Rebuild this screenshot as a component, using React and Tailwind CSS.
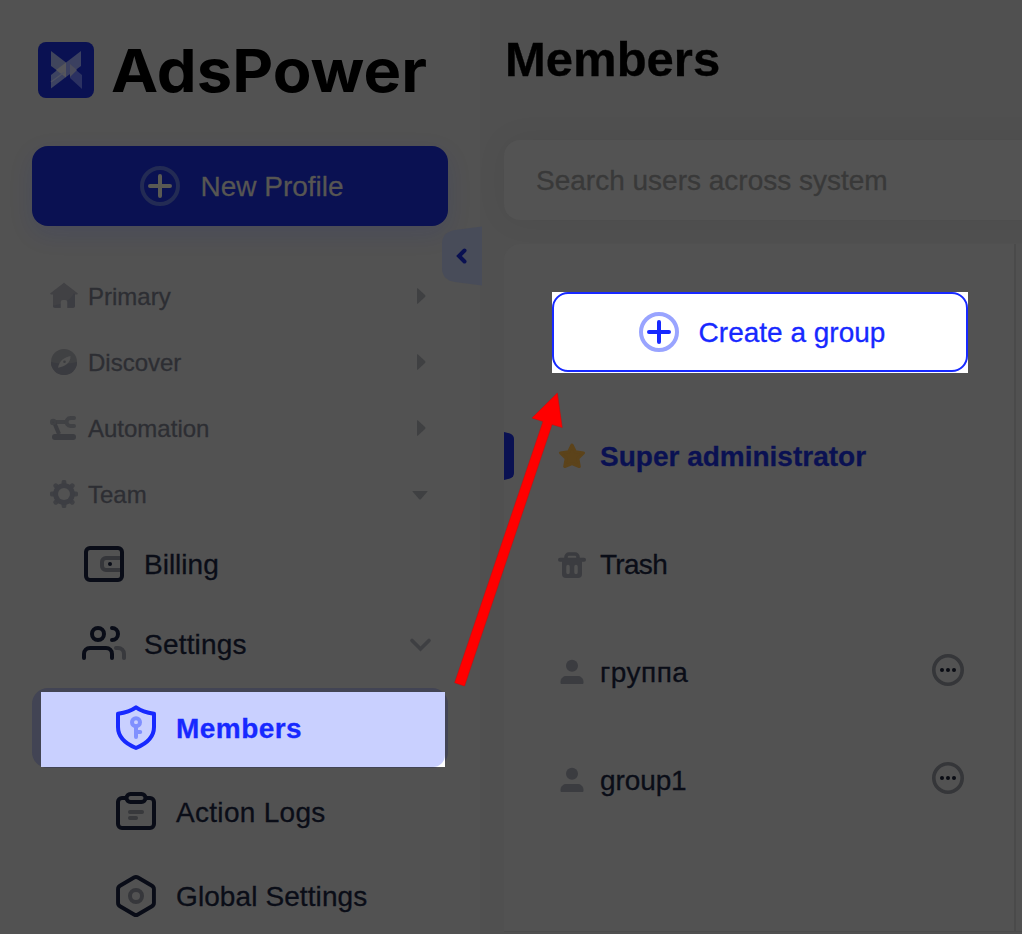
const HomeIcon = () => (
  <svg width="28" height="28" viewBox="0 0 28 28">
    <path d="M14 .8 27.600 11.300q.6 1-.6 1.100H25v11.400a2 2 0 0 1-2 2H5a2 2 0 0 1-2-2V12.400H1q-1.200-.1-.6-1.100z" fill="#414144" />
    <path d="M25 12.400v11.400a2 2 0 0 1-2 2H5a2 2 0 0 1-2-2C13 22 21 18 24 11z" fill="#3c3d42" />
    <path d="M10.700 26v-6a2 2 0 0 1 2-2h2.600a2 2 0 0 1 2 2v6z" fill="#525252" />
  </svg>
);

const CompassIcon = () => (
  <svg width="28" height="28" viewBox="0 0 28 28">
    <circle cx="14" cy="14" r="13" fill="#404143" />
    <path d="M1 14a13 13 0 0 0 26 0C18 16 10 16 1 14z" fill="#3a3b40" />
    <path d="M20.500 8c.3 3-1 6-3.800 8.200-2.300 1.500-6 3.300-8.700 3.600.6-3.300 2.300-6.300 4.600-8.200C15 9.800 18 8.600 20.500 8z" fill="#525252" />
    <circle cx="14.500" cy="13.700" r="1.300" fill="#3c3d41" />
  </svg>
);

const RobotIcon = () => (
  <svg width="28" height="28" viewBox="0 0 28 28" fill="none" stroke="#404144" strokeWidth="4" strokeLinecap="round">
    <path d="M3 8h12" />
    <path d="m4 8 5 12" stroke="#3c3d41" strokeLinecap="butt" />
    <path d="M24 4h-3.500c-3 0-4 3-4 4s1 4 4 4H24" strokeLinejoin="round" />
    <circle cx="3.200" cy="8" r="1.200" />
    <path d="M5 23h18" stroke="#3b3c40" strokeWidth="6" />
  </svg>
);

const GearIcon = () => (
  <svg width="28" height="28" viewBox="0 0 28 28">
    <path d="M14 2.200v23.600M2.200 14h23.600M5.800 5.800l16.400 16.400M22.200 5.800 5.800 22.200" stroke="#3f4044" strokeWidth="4.800" strokeLinecap="round" />
    <circle cx="14" cy="14" r="10.800" fill="#3d3e43" />
    <circle cx="14" cy="14" r="6" fill="#525252" />
  </svg>
);

const WalletIcon = () => (
  <svg width="48" height="48" viewBox="0 0 48 48" fill="none" strokeWidth="4">
    <path d="M42 18H26a4 4 0 0 0-4 4v4a4 4 0 0 0 4 4h16" stroke="#35363a" />
    <rect x="6" y="8" width="36" height="32" rx="4" stroke="#090c17" />
    <circle cx="30" cy="24" r="2" fill="#090c17" />
  </svg>
);

const UsersIcon = () => (
  <svg width="48" height="48" viewBox="0 0 48 48" fill="none" stroke="#090c17" strokeWidth="4" strokeLinecap="round">
    <circle cx="18" cy="14" r="6" />
    <path d="M32 8a6 6 0 0 1 0 12" />
    <path d="M4 38v-4a6 6 0 0 1 6-6h16a6 6 0 0 1 6 6v4" />
    <path d="M36 28h2a6 6 0 0 1 6 6v4" stroke="#38393d" />
  </svg>
);

const ShieldIcon = () => (
  <svg width="48" height="48" viewBox="0 0 48 48" fill="none" strokeWidth="4" strokeLinejoin="round">
    <path d="M24 3.400c5 3.600 11 5.400 18 6.400V23c0 9-7 16.500-18 21C13 39.500 6 32 6 23V9.800C13 8.800 19 7 24 3.400z" stroke="#1729ff" />
    <g stroke="#8090ff">
      <circle cx="24" cy="18.300" r="4" />
      <path d="M24 22v11" strokeLinecap="round" />
      <path d="M24 28h4.200" strokeLinecap="round" />
    </g>
  </svg>
);

const ClipboardIcon = () => (
  <svg width="48" height="48" viewBox="0 0 48 48" fill="none" stroke="#090c17" strokeWidth="4" strokeLinecap="round">
    <path d="M14 10h-4a4 4 0 0 0-4 4v22a4 4 0 0 0 4 4h28a4 4 0 0 0 4-4V14a4 4 0 0 0-4-4h-4" />
    <rect x="14.500" y="6" width="19" height="8" rx="4" />
    <path d="M18 24h12M18 30h6" stroke="#38393c" />
  </svg>
);

const HexIcon = () => (
  <svg width="48" height="48" viewBox="0 0 48 48" fill="none" strokeWidth="4">
    <path d="M22 5.600a4 4 0 0 1 4 0l14.500 8.200a4 4 0 0 1 2 3.500v13.400a4 4 0 0 1-2 3.500L26 42.400a4 4 0 0 1-4 0L7.500 34.200a4 4 0 0 1-2-3.500V17.300a4 4 0 0 1 2-3.500z" stroke="#090c17" transform="translate(.7 0) scale(.97 1)" />
    <circle cx="24" cy="24" r="6" stroke="#36373b" />
  </svg>
);

const PlusIcon = ({ ring, plus }) => (
  <svg width="40" height="40" viewBox="0 0 40 40" fill="none" strokeWidth="4" strokeLinecap="round">
    <circle cx="20" cy="20" r="18" stroke={ring} />
    <path d="M20 10v20M10 20h20" stroke={plus} />
  </svg>
);

const StarIcon = () => (
  <svg width="28" height="28" viewBox="0 0 28 28">
    <path d="m14 3 3.300 6.700 8.200 1.200-5.700 5.400 1.500 8.200L14 21.500l-7.300 3 1.500-8.200-5.700-5.400 8.200-1.200z" fill="#5c431a" stroke="#5c431a" strokeWidth="3" strokeLinejoin="round" />
  </svg>
);

const TrashIcon = () => (
  <svg width="28" height="28" viewBox="0 0 28 28">
    <path d="M8 8V6a3 3 0 0 1 3-3h6a3 3 0 0 1 3 3v2" fill="none" stroke="#3a3b3f" strokeWidth="3.500" />
    <path d="M2 8.700h24" stroke="#3a3b3f" strokeWidth="4" strokeLinecap="round" />
    <path d="M4 9h20v14a4 4 0 0 1-4 4H8a4 4 0 0 1-4-4z" fill="#3b3c40" />
    <path d="M10 15.500v6M18 15.500v6" stroke="#525252" strokeWidth="3.500" strokeLinecap="round" />
  </svg>
);

const PersonIcon = () => (
  <svg width="28" height="28" viewBox="0 0 28 28" fill="#3b3c40">
    <circle cx="14" cy="7.800" r="6" />
    <path d="M3 25.500v-2a5 5 0 0 1 5-5h12a5 5 0 0 1 5 5v2z" stroke="#3b3c40" strokeLinejoin="round" />
  </svg>
);

const MoreIcon = () => (
  <svg width="32" height="32" viewBox="0 0 32 32">
    <circle cx="16" cy="16" r="14.200" fill="none" stroke="#353639" strokeWidth="3.600" />
    <g fill="#0a0c14">
      <circle cx="10" cy="16" r="2" />
      <circle cx="16" cy="16" r="2" />
      <circle cx="22" cy="16" r="2" />
    </g>
  </svg>
);

const Logo = () => (
  <svg width="400" height="72" viewBox="0 0 400 72" className="block">
    <rect x="0" y="8" width="56" height="56" rx="8" fill="#0a1152" />
    <path d="m13 17 15 11.500V43L13 32z" fill="#40455c" />
    <path d="M43 17 28 28.500V43l15-11z" fill="#3b4060" />
    <path d="M13 41 28 29v14L13 54.500z" fill="#3d4361" />
    <path d="m32 31 12 10v14L32 44z" fill="#2b3161" />
    <path d="m18 36 10-7.500v15z" fill="#56565b" />
    <path d="m32 30 7 6-7 7z" fill="#4b4c5b" />
    <path d="m13 48 13-9.500" stroke="#4d5163" strokeWidth="1.500" />
    <text x="73" y="57.500" fill="#000" textLength="316" lengthAdjust="spacingAndGlyphs" className="font-[Inter] text-[59px] font-bold">
      AdsPower
    </text>
  </svg>
);

const sections = [
  { name: 'Primary', Icon: HomeIcon },
  { name: 'Discover', Icon: CompassIcon },
  { name: 'Automation', Icon: RobotIcon },
  { name: 'Team', Icon: GearIcon, open: true },
];

const groups = [
  { name: 'группа', style: 'tracking-[0.5px]' },
  { name: 'group1', style: 'tracking-[-0.1px]' },
];

const Sidebar = () => (
  <aside className="relative w-[480px] h-full shrink-0 bg-[#525252] px-8 text-[#0a0d17]">
    <div className="pt-[34px] pl-1.5 h-[146px]">
      <Logo />
    </div>
    <button className="flex h-20 w-[416px] items-center justify-center gap-5 rounded-2xl bg-[#0a1152] pl-1 text-[28px] text-[#575652] shadow-[0_8px_24px_rgba(20,30,150,0.12)]">
      <PlusIcon ring="#232b54" plus="#5a5953" />
      <span className="pt-0.5">New Profile</span>
    </button>

    <nav className="pt-[37px]">
      {sections.map(({ name, Icon, open }) => (
        <div key={name} className="flex h-[66px] items-center pl-[18px] pr-5 text-2xl text-[#2d2e33]">
          <Icon />
          <span className="ml-2.5 flex-1 pt-0.5">{name}</span>
          {open ? (
            <svg width="16" height="16" viewBox="0 0 16 16"><path d="M.5 5.500Q0 5 1 5h14q1 0 .5.500L9 13q-1 1-2 0z" fill="#3f4042" /></svg>
          ) : (
            <svg width="16" height="16" viewBox="0 0 16 16"><path d="M5 .5Q5 0 6 .5l7 6.500q1 1 0 2l-7 6.500q-1 .5-1 0z" fill="#3f4042" /></svg>
          )}
        </div>
      ))}

      <div className="-mt-[3px] text-[28px]">
        <div className="flex h-20 items-center gap-4 pl-12">
          <WalletIcon />
          <span className="pt-0.5">Billing</span>
        </div>
        <div className="flex h-20 items-center gap-4 pl-12 pr-3.5">
          <UsersIcon />
          <span className="flex-1 pt-0.5 tracking-[0.2px]">Settings</span>
          <svg width="27" height="16" viewBox="0 0 27 16">
            <path d="m5 4.500 8.500 8.500L22 4.500" fill="none" stroke="#3e3f42" strokeWidth="3.600" strokeLinecap="round" />
          </svg>
        </div>
        <div className="mt-1 h-20 w-[416px] rounded-2xl bg-[#424454] pt-1 pl-[9px]">
          {/* highlighted step, square cut-out over the rounded item */}
          <div className="h-[75px] w-[404px] bg-white">
            <div className="flex h-full items-center gap-4 rounded-br-xl bg-[#c9d0ff] pl-[71px] pb-[3px] font-bold text-[#1729ff]">
              <ShieldIcon />
              <span className="pt-0.5 tracking-[0.45px]">Members</span>
            </div>
          </div>
        </div>
        <div className="mt-1 flex h-20 items-center gap-4 pl-20">
          <ClipboardIcon />
          <span className="pt-0.5 tracking-[0.3px]">Action Logs</span>
        </div>
        <div className="mt-1 flex h-20 items-center gap-4 pl-20">
          <HexIcon />
          <span className="pt-0.5 tracking-[0.1px]">Global Settings</span>
        </div>
      </div>
    </nav>

    {/* collapse handle */}
    <svg width="40" height="60" viewBox="0 0 40 60" className="absolute left-[442px] top-[226px] z-10">
      <path d="M40 .5v59L13 56Q0 54 0 42V18Q0 6 13 4z" fill="#484c59" />
      <path d="m22.500 24.500-5.500 5.500 5.500 5.500" fill="none" stroke="#0a1152" strokeWidth="4" strokeLinecap="round" />
    </svg>
  </aside>
);

const Members = () => (
  <main className="flex-1 min-w-0 bg-[#505050] pl-6 text-[28px] text-[#0a0d17]">
    <h1 className="flex h-[116px] items-center pt-1 pl-px text-[49px] font-bold text-black">Members</h1>
    <div className="mt-6 flex h-20 w-[700px] items-center rounded-2xl bg-[#535353] pl-8 pt-0.5 text-[#393939] shadow-[0_0_32px_rgba(0,0,0,0.06)]">
      Search users across system
    </div>
    <div className="mt-6 flex h-[688px] w-[700px] rounded-tl-2xl border-b border-[#4b4b4b] bg-[#525252]">
      <section className="w-[512px] border-r-2 border-[#4a4a4a]">
        <div className="mt-12 ml-12 h-[81px] w-[416px] bg-white">
          <button className="flex h-20 w-full items-center justify-center gap-5 rounded-2xl border-2 border-[#1729ff] pl-1 text-[#1729ff]">
            <PlusIcon ring="#99a4ff" plus="#1729ff" />
            <span className="pt-0.5">Create a group</span>
          </button>
        </div>
        <ul className="mt-[29px]">
          <li className="flex h-[108px] items-center font-bold text-[#0a1152]">
            <svg width="10" height="48" viewBox="0 0 10 48"><path d="M0 0 6 1.500Q10 3 10 7v34q0 4-4 5.500L0 48z" fill="#0a1152" /></svg>
            <span className="ml-11 mr-3.5"><StarIcon /></span>
            <span className="pt-0.5">Super administrator</span>
          </li>
          <li className="flex h-[108px] items-center gap-3.5 pl-[54px]">
            <span className="pt-0.5"><TrashIcon /></span>
            <span className="pt-0.5 tracking-[-0.7px]">Trash</span>
          </li>
          {groups.map(({ name, style }) => (
            <li key={name} className="flex h-[108px] items-center pl-[54px] pr-[50px]">
              <PersonIcon />
              <span className={`ml-3.5 flex-1 pt-0.5 ${style}`}>{name}</span>
              <span className="-mt-1"><MoreIcon /></span>
            </li>
          ))}
        </ul>
      </section>
      <div className="flex-1 bg-[#515151]" />
    </div>
  </main>
);

const App = () => (
  <div className="relative flex h-[934px] w-[1022px] overflow-hidden bg-[#505050] font-['Liberation_Sans',sans-serif] leading-normal [-webkit-text-stroke:0.3px]">
    <Sidebar />
    <Members />
    {/* pointer from the menu item to the button */}
    <svg width="120" height="310" viewBox="450 385 120 310" className="absolute left-[450px] top-[385px] z-20">
      <path d="m557.300 393 4.900 34.500-10.200-3-87.500 261.500-9.800-3.300L543 421.500l-11-3.500z" fill="#f00" stroke="#d00" strokeWidth=".5" />
    </svg>
  </div>
);

export default App;
